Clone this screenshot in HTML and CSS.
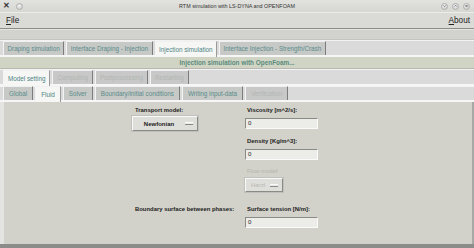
FILE: index.html
```html
<!DOCTYPE html>
<html>
<head>
<meta charset="utf-8">
<link rel="stylesheet" href="styles.css">
</head>
<body>
<div class="window">
  <div class="titlebar">
    <div class="tb-left">
      <span class="tb-x">✕</span>
      <span class="tb-circle"></span>
    </div>
    <div class="tb-title">RTM simulation with LS-DYNA and OPENFOAM</div>
    <div class="tb-right">
      <span class="tb-circle"><svg viewBox="0 0 6 6"><path d="M1.6 2.4 L3 3.8 L4.4 2.4" fill="none" stroke="#555" stroke-width="0.9"/></svg></span>
      <span class="tb-circle"><svg viewBox="0 0 6 6"><path d="M1.6 3.6 L3 2.2 L4.4 3.6" fill="none" stroke="#555" stroke-width="0.9"/></svg></span>
      <span class="tb-circle"><svg viewBox="0 0 6 6"><path d="M1.8 1.8 L4.2 4.2 M4.2 1.8 L1.8 4.2" fill="none" stroke="#555" stroke-width="0.9"/></svg></span>
    </div>
  </div>
  <div class="menubar">
    <span class="menu"><u>F</u>ile</span>
    <span class="menu"><u>A</u>bout</span>
  </div>
  <div class="toolbar"></div>
  <div class="tabbar tabbar1">
    <span class="tab">Draping simulation</span>
    <span class="tab">Interface Draping - Injection</span>
    <span class="tab selected">Injection simulation</span>
    <span class="tab">Interface Injection - Strength/Crash</span>
  </div>
  <div class="banner">Injection simulation with OpenFoam...</div>
  <div class="tabbar tabbar2">
    <span class="tab selected">Model setting</span>
    <span class="tab disabled">Computing</span>
    <span class="tab disabled">Postprocessing</span>
    <span class="tab disabled">Restarting</span>
  </div>
  <div class="tabbar tabbar3">
    <span class="tab">Global</span>
    <span class="tab selected">Fluid</span>
    <span class="tab">Solver</span>
    <span class="tab">Boundary/initial conditions</span>
    <span class="tab">Writing input-data</span>
    <span class="tab disabled">Verification</span>
  </div>
  <div class="content">
    <div class="form">
      <div class="cell r1 c1">
        <div class="label">Transport model:</div>
        <div class="combo wide"><span class="combo-text">Newfonian</span><span class="combo-ind"></span></div>
      </div>
      <div class="cell r1 c2">
        <div class="label">Viscosity [m^2/s]:</div>
        <div class="input">0</div>
      </div>
      <div class="cell r2 c2">
        <div class="label">Density [Kg/m^3]:</div>
        <div class="input">0</div>
      </div>
      <div class="cell r3 c2">
        <div class="label dim">Flow model:</div>
        <div class="combo small dim"><span class="combo-text">Harzl</span><span class="combo-ind"></span></div>
      </div>
      <div class="cell r4 c1">
        <div class="label">Boundary surface between phases:</div>
      </div>
      <div class="cell r4 c2">
        <div class="label">Surface tension [N/m]:</div>
        <div class="input">0</div>
      </div>
    </div>
  </div>
  <div class="statusbar"></div>
</div>
</body>
</html>
```

FILE: styles.css
```css
* { box-sizing: border-box; }
html, body { margin: 0; padding: 0; }
body {
  width: 474px;
  height: 248px;
  overflow: hidden;
  font-family: "Liberation Sans", Arial, sans-serif;
  background: #d6d6d2;
}
.window {
  width: 474px;
  height: 248px;
  display: flex;
  flex-direction: column;
}
.titlebar {
  height: 12px;
  flex: none;
  display: flex;
  align-items: center;
  background: linear-gradient(#e2e2de, #d6d6d2);
  position: relative;
  padding: 0 3px;
}
.tb-left, .tb-right { display: flex; align-items: center; gap: 5px; }
.tb-right { margin-left: auto; gap: 4px; padding-right: 1px; }
.tb-x { font-size: 8px; color: #333; font-weight: bold; line-height: 8px; width: 8px; }
.tb-circle {
  width: 7px; height: 7px; border-radius: 50%;
  background: radial-gradient(circle at 40% 35%, #f4f4f4, #c4c4c4);
  border: 1px solid #b0b0b0;
  display: flex; align-items: center; justify-content: center;
}
.tb-circle svg { width: 6px; height: 6px; }
.tb-title {
  position: absolute; left: 0; right: 0; top: 0;
  text-align: center;
  font-size: 5.4px; line-height: 12px; color: #333;
  pointer-events: none;
}
.menubar {
  height: 17px;
  flex: none;
  display: flex;
  justify-content: space-between;
  align-items: center;
  padding: 0 4px 0 6px;
  background: #dadad6;
  border-top: 1px solid #ececea;
  border-bottom: 1px solid #8c8c8a;
}
.menu { font-size: 8.2px; color: #222; }
.toolbar {
  height: 11px;
  flex: none;
  background: #d2d2ce;
  border-top: 1px solid #e4e4e2;
  border-bottom: 1px solid #c4c4c0;
}
.tabbar {
  flex: none;
  display: flex;
  align-items: flex-end;
  gap: 2px;
  padding-left: 3px;
  background: #dadada;
  border-top: 1px solid #f2f2f2;
  border-bottom: 2px solid #f6f6f6;
}
.tabbar1 { height: 17px; }
.tabbar2 { height: 17px; }
.tabbar3 { height: 16px; }
.tab {
  height: 14px;
  display: flex; align-items: center;
  padding: 0 5px;
  font-size: 6.3px;
  color: #5b8b8b;
  background: #c6c9c6;
  border-left: 1px solid #f4f4f4;
  border-top: 1px solid #f0f0f0;
  border-right: 1px solid #7c7c7c;
  white-space: nowrap;
}
.tabbar1 .tab { padding: 0 3.5px; }
.tabbar2 .tab { padding: 0 4px; }
.tab.selected {
  background: #f6f6f4;
  color: #4c8484;
  margin-bottom: -2px;
  height: 16px;
  border-right-color: #9a9a9a;
}
.tab.disabled { color: #b2b6b2; background: #c8c8c8; }
.banner {
  height: 12px;
  flex: none;
  background: #d0d4c4;
  color: #5a8c7c;
  font-weight: bold;
  font-size: 6.4px;
  line-height: 11px;
  text-align: center;
  border-bottom: 1px solid #b8b8b0;
}
.content {
  flex: 1;
  background: #d2d2ca;
  border-left: 4px solid #e4e4e2;
  border-right: 2px solid #a8a8a4;
  padding: 5px 0 0 129px;
}
.form {
  display: grid;
  grid-template-columns: 112px 80px;
  grid-template-rows: 31px 30px 38px auto;
}
.r1 { grid-row: 1; } .r2 { grid-row: 2; } .r3 { grid-row: 3; } .r4 { grid-row: 4; }
.c1 { grid-column: 1; } .c2 { grid-column: 2; }
.cell { display: flex; flex-direction: column; align-items: flex-start; }
.label {
  font-size: 5.9px; font-weight: bold; color: #1c1c1c;
  line-height: 7px; white-space: nowrap; padding-left: 2px;
}
.label.dim { color: #b4b4ae; font-weight: normal; }
.input {
  margin-top: 4px;
  width: 73px; height: 11px;
  background: #ecece8;
  border-top: 1px solid #8a8a86;
  border-left: 1px solid #8a8a86;
  border-right: 1px solid #fafafa;
  border-bottom: 1px solid #fafafa;
  font-size: 6px; line-height: 9px; color: #222;
  padding-left: 2px;
}
.combo {
  display: flex; align-items: center;
  background: #dededa;
  border-top: 1px solid #fafafa;
  border-left: 1px solid #fafafa;
  border-right: 1px solid #8a8a86;
  border-bottom: 1px solid #8a8a86;
  box-shadow: 0 0 0 1px #c0c0bc;
  font-size: 6px; font-weight: bold; color: #1c1c1c;
}
.combo.wide { width: 66px; height: 15px; margin-top: 2px; margin-left: -1px; }
.combo.small { width: 38px; height: 14px; margin-top: 3px; color: #b8b8b2; font-weight: normal; }
.combo-text { flex: 1; text-align: center; }
.combo.small .combo-text { text-align: left; padding-left: 5px; }
.combo-ind {
  width: 8px; height: 3px; margin-right: 4px;
  background: #e8e8e6;
  border-top: 1px solid #fafafa;
  border-bottom: 1px solid #8a8a86;
}
.statusbar {
  height: 4px; flex: none;
  background: #8c8c8a;
}
```
